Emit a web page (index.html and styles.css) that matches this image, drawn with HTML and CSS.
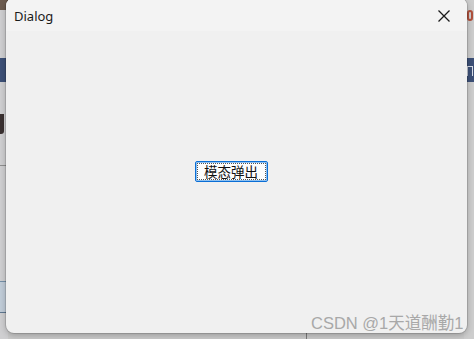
FILE: index.html
```html
<!DOCTYPE html>
<html>
<head>
<meta charset="utf-8">
<link rel="stylesheet" href="styles.css">
</head>
<body>
<div class="desktop">
  <div class="bg-left">
    <div class="bl-top"></div>
    <div class="bl-blue"></div>
    <div class="bl-glyph"></div>
    <div class="bl-line"></div>
    <div class="bl-box"></div>
  </div>
  <div class="bg-right">
    <div class="br-s"></div>
    <div class="br-blue"><div class="br-mark"></div></div>
  </div>
  <div class="bg-bottom-line"></div>
  <div class="window">
    <div class="titlebar">
      <span class="title">Dialog</span>
      <span class="close">
        <svg width="14" height="14" viewBox="0 0 14 14"><path d="M1.5 1.5 L12.5 12.5 M12.5 1.5 L1.5 12.5" stroke="#1a1a1a" stroke-width="1.3" fill="none"/></svg>
      </span>
    </div>
    <div class="client">
      <button class="btn">模态弹出</button>
    </div>
  </div>
  <div class="watermark">CSDN @1天道酬勤1</div>
</div>
</body>
</html>
```
FILE: styles.css
```css
html, body {
  margin: 0;
  padding: 0;
}
.desktop {
  position: relative;
  width: 474px;
  height: 339px;
  overflow: hidden;
  background: #c9c9c9;
  font-family: "Segoe UI", "Noto Sans", "Noto Sans CJK SC", sans-serif;
}
.bg-left {
  position: absolute;
  left: 0;
  top: 0;
  width: 8px;
  height: 339px;
  background: #cfcfd1;
}
.bl-top {
  position: absolute;
  left: 0; top: 0; width: 8px; height: 10px;
  background: #6d5c50;
}
.bl-blue {
  position: absolute;
  left: 0; top: 58px; width: 8px; height: 24px;
  background: #3d5077;
}
.bl-glyph {
  position: absolute;
  left: 0; top: 114px;
  width: 4px; height: 20px;
  background: #3a3030;
  border-radius: 0 0 3px 0;
}
.bl-line {
  position: absolute;
  left: 0; top: 165px; width: 8px; height: 1px;
  background: #8e8e8e;
}
.bl-box {
  position: absolute;
  left: 0; top: 281px; width: 8px; height: 30px;
  background: #c0ccd8;
  border-top: 1px solid #7590a8;
  border-bottom: 1px solid #5f7790;
}
.bg-right {
  position: absolute;
  right: 0;
  top: 0;
  width: 10px;
  height: 339px;
  background: #cdcdcd;
}
.br-s {
  position: absolute;
  left: 3px; top: 10px;
  width: 6px; height: 11px;
  border: 2px solid #b0503c;
  border-radius: 4px;
  box-sizing: border-box;
}
.br-blue {
  position: absolute;
  left: 0; top: 58px; width: 10px; height: 24px;
  background: #3d5077;
}
.br-mark {
  position: absolute;
  left: 3px; top: 8px;
  width: 6px; height: 10px;
  border: 1.5px solid #d8dde8;
  border-bottom: none;
  box-sizing: border-box;
}
.bg-bottom-line {
  position: absolute;
  left: 306px; top: 332px; width: 1px; height: 7px;
  background: #7a7a7a;
}
.window {
  position: absolute;
  left: 6px;
  top: -2px;
  width: 461px;
  height: 335px;
  background: #f0f0f0;
  border-radius: 8px;
  box-shadow: 0 0 0 1px rgba(0,0,0,0.12), 0 2px 6px rgba(0,0,0,0.25);
  display: flex;
  flex-direction: column;
  overflow: hidden;
}
.titlebar {
  height: 33px;
  flex: none;
  background: #f3f3f3;
  display: flex;
  align-items: center;
  justify-content: space-between;
  padding: 2px 0 0 8px;
  box-sizing: border-box;
}
.title {
  font-family: "Segoe UI", "Noto Sans", sans-serif;
  font-size: 13px;
  color: #1a1a1a;
}
.close {
  width: 46px;
  display: flex;
  justify-content: center;
  align-items: center;
  padding-left: 6px;
}
.close svg { display: block; }
.client {
  flex: 1;
  display: flex;
  align-items: center;
  justify-content: center;
  padding-bottom: 21px;
  padding-right: 11px;
}
.btn {
  width: 73px;
  height: 21px;
  padding: 0;
  background: #fdfdfd;
  border: 1px solid #0a6ed6;
  border-radius: 2px;
  outline: 1px dotted #555;
  outline-offset: -3px;
  font-family: "Noto Sans CJK SC", sans-serif;
  font-size: 13.5px;
  line-height: 19px;
  color: #111;
  box-shadow: inset 0 0 0 1px #8ec0ef;
}
.watermark {
  position: absolute;
  left: 311px;
  top: 310px;
  font-family: "Liberation Sans", "Noto Sans CJK SC", sans-serif;
  font-size: 16.5px;
  color: #a8a8a8;
  white-space: nowrap;
}
```
